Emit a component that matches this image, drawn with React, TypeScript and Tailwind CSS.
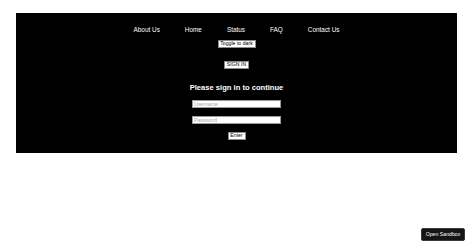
import React from "react";

export default function App() {
  const font = { fontFamily: '"Liberation Sans", Arial, sans-serif' };
  return (
    <div className="relative w-[474px] h-[248px] bg-white" style={font}>
      <div className="pt-[13px] px-[16px]">
        <div className="bg-black w-[441px] pt-[13px] pb-[13px] flex flex-col items-center">
          <nav className="flex justify-center gap-[25px] h-[8px] items-center text-white text-[6.4px] leading-none">
            <span>About Us</span>
            <span>Home</span>
            <span>Status</span>
            <span>FAQ</span>
            <span>Contact Us</span>
          </nav>
          <button className="mt-[6px] h-[8px] w-[38px] bg-white border border-[#8a8a8a] text-black text-[5.2px] leading-none flex items-center justify-center">
            Toggle to dark
          </button>
          <button className="mt-[13px] h-[8px] w-[25px] bg-white border border-[#8a8a8a] text-black text-[5.2px] leading-none flex items-center justify-center">
            SIGN IN
          </button>
          <h3 className="mt-[14px] h-[10px] flex items-center text-white font-bold text-[7.6px] leading-none">
            Please sign in to continue
          </h3>
          <input
            className="mt-[7px] h-[8px] w-[89px] bg-white border border-[#9a9a9a] text-[5.2px] leading-none px-[1px] placeholder:text-[#a9a9a9] outline-none"
            placeholder="Username"
          />
          <input
            type="password"
            className="mt-[8px] h-[8px] w-[89px] bg-white border border-[#9a9a9a] text-[5.2px] leading-none px-[1px] placeholder:text-[#a9a9a9] outline-none"
            placeholder="Password"
          />
          <button className="mt-[8px] h-[8px] w-[18px] bg-white border border-[#8a8a8a] text-black text-[5.2px] leading-none flex items-center justify-center">
            Enter
          </button>
        </div>
      </div>
      <div className="absolute left-[421px] top-[228px] w-[44px] h-[13px] rounded-[2px] bg-[#151515] border border-[#3a3a3a] text-white text-[5.2px] leading-none flex items-center justify-center">
        Open Sandbox
      </div>
    </div>
  );
}
